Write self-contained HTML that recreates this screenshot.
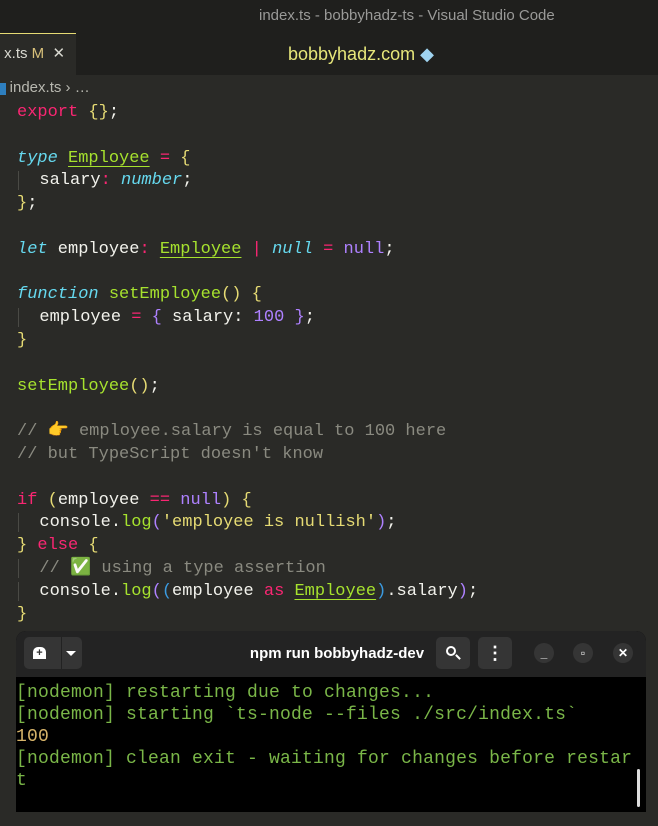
<!DOCTYPE html>
<html><head><style>
*{margin:0;padding:0;box-sizing:border-box}
body{width:658px;height:826px;background:#2a2a27;overflow:hidden;position:relative;font-family:"Liberation Sans",sans-serif}
.title{position:absolute;left:0;top:0;width:658px;height:33px;background:#1f1f1d;color:#9a9a98;font-size:15px;line-height:31px;padding-left:259px}
.tabs{position:absolute;top:33px;left:0;width:658px;height:42px;background:#1f1f1d}
.tab{position:absolute;left:0;top:0;width:76px;height:42px;background:#2a2a27;border-top:1px solid #e6db74;color:#d8d8d0;font-size:15px;line-height:40px}
.brand{position:absolute;left:288px;top:0;line-height:42px;color:#e6e67a;font-size:18px}
.bc{position:absolute;top:79px;left:0;color:#b8b8b0;font-size:15px}
.code{position:absolute;left:17px;top:102px;font-family:"Liberation Mono",monospace;font-size:17px;line-height:22.8px;color:#f2f2ec;white-space:pre}
.k{color:#f92672}.t{color:#66d9ef;font-style:italic}.g{color:#a6e22e}.y{color:#e6db74}.n{color:#ae81ff}.c{color:#8a8a80}.u{text-decoration:underline;text-decoration-color:#a6e22e;text-underline-offset:4px}
.bar{border-left:1px solid #4a4a45;margin-left:1px}
.term{position:absolute;left:16px;top:631px;width:630px;height:181px;background:#000;border-radius:10px 10px 0 0;overflow:hidden}
.th{height:46px;background:#232323;position:relative}
.btn{position:absolute;background:#353535;border-radius:5px}
.tt{position:absolute;left:0;width:630px;top:0;line-height:46px;text-align:center;color:#fff;font-weight:bold;font-size:15px;padding-left:12px}
.tb{font-family:"Liberation Mono",monospace;font-size:18px;line-height:22px;color:#7ab648;white-space:pre;padding:5px 0 0 0;letter-spacing:0.2px}
.circ{position:absolute;top:12px;width:20px;height:20px;border-radius:50%;background:#353535;color:#fff;font-size:12px;text-align:center;line-height:20px;font-weight:bold}
</style></head><body>
<div class="title">index.ts - bobbyhadz-ts - Visual Studio Code</div>
<div class="tabs"><div class="tab">&nbsp;x.ts <span style="color:#d8c07a">M</span> &nbsp;✕</div><div class="brand">bobbyhadz.com <span style="color:#9fd3f0">◆</span></div></div>
<div class="bc"><span style="background:#2e7fbf;color:#2e7fbf;font-size:11px">s</span> index.ts › …</div>
<div class="code"><span class="k">export</span> <span class="y">{}</span>;

<span class="t">type</span> <span class="g u">Employee</span> <span class="k">=</span> <span class="y">{</span>
<span class="bar"> </span> salary<span class="k">:</span> <span class="t">number</span>;
<span class="y">}</span>;

<span class="t">let</span> employee<span class="k">:</span> <span class="g u">Employee</span> <span class="k">|</span> <span class="t">null</span> <span class="k">=</span> <span class="n">null</span>;

<span class="t">function</span> <span class="g">setEmployee</span><span class="y">()</span> <span class="y">{</span>
<span class="bar"> </span> employee <span class="k">=</span> <span class="n">{</span> salary: <span class="n">100</span> <span class="n">}</span>;
<span class="y">}</span>

<span class="g">setEmployee</span><span class="y">()</span>;

<span class="c">// <span style="color:#f0b030">👉</span> employee.salary is equal to 100 here</span>
<span class="c">// but TypeScript doesn't know</span>

<span class="k">if</span> <span class="y">(</span>employee <span class="k">==</span> <span class="n">null</span><span class="y">)</span> <span class="y">{</span>
<span class="bar"> </span> console.<span class="g">log</span><span class="n">(</span><span class="y">'employee is nullish'</span><span class="n">)</span>;
<span class="y">}</span> <span class="k">else</span> <span class="y">{</span>
<span class="bar"> </span> <span class="c">// <span style="color:#6ac23a">✅</span> using a type assertion</span>
<span class="bar"> </span> console.<span class="g">log</span><span class="n">(</span><span style="color:#3b9be0">(</span>employee <span class="k">as</span> <span class="g u">Employee</span><span style="color:#3b9be0">)</span>.salary<span class="n">)</span>;
<span class="y">}</span></div>
<div class="term">
<div class="th">
<div class="btn" style="left:8px;top:6px;width:58px;height:32px"></div>
<div style="position:absolute;left:45px;top:6px;width:1px;height:32px;background:#222"></div>
<div style="position:absolute;left:17px;top:16px;width:13px;height:12px;background:#fff;border-radius:5px 5px 0 0;color:#333;font-size:11px;line-height:12px;text-align:center;font-weight:bold">+</div>
<div style="position:absolute;left:50px;top:20px;border-left:5px solid transparent;border-right:5px solid transparent;border-top:5px solid #fff"></div>
<div class="tt">npm run bobbyhadz-dev</div>
<div class="btn" style="left:420px;top:6px;width:34px;height:32px"></div>
<div style="position:absolute;left:430px;top:15px;width:10px;height:10px;border:2px solid #fff;border-radius:50%"></div>
<div style="position:absolute;left:439px;top:25px;width:6px;height:2px;background:#fff;transform:rotate(45deg)"></div>
<div class="btn" style="left:462px;top:6px;width:34px;height:32px;color:#fff;text-align:center;line-height:32px;font-weight:bold;font-size:18px">⋮</div>
<div class="circ" style="left:518px">_</div>
<div class="circ" style="left:557px">▫</div>
<div class="circ" style="left:597px">✕</div>
</div>
<div class="tb">[nodemon] restarting due to changes...
[nodemon] starting `ts-node --files ./src/index.ts`
<span style="color:#d7b46a">100</span>
[nodemon] clean exit - waiting for changes before restar
t</div>
<div style="position:absolute;left:621px;top:138px;width:3px;height:38px;background:#ddd;border-radius:2px"></div>
</div>
</body></html>
